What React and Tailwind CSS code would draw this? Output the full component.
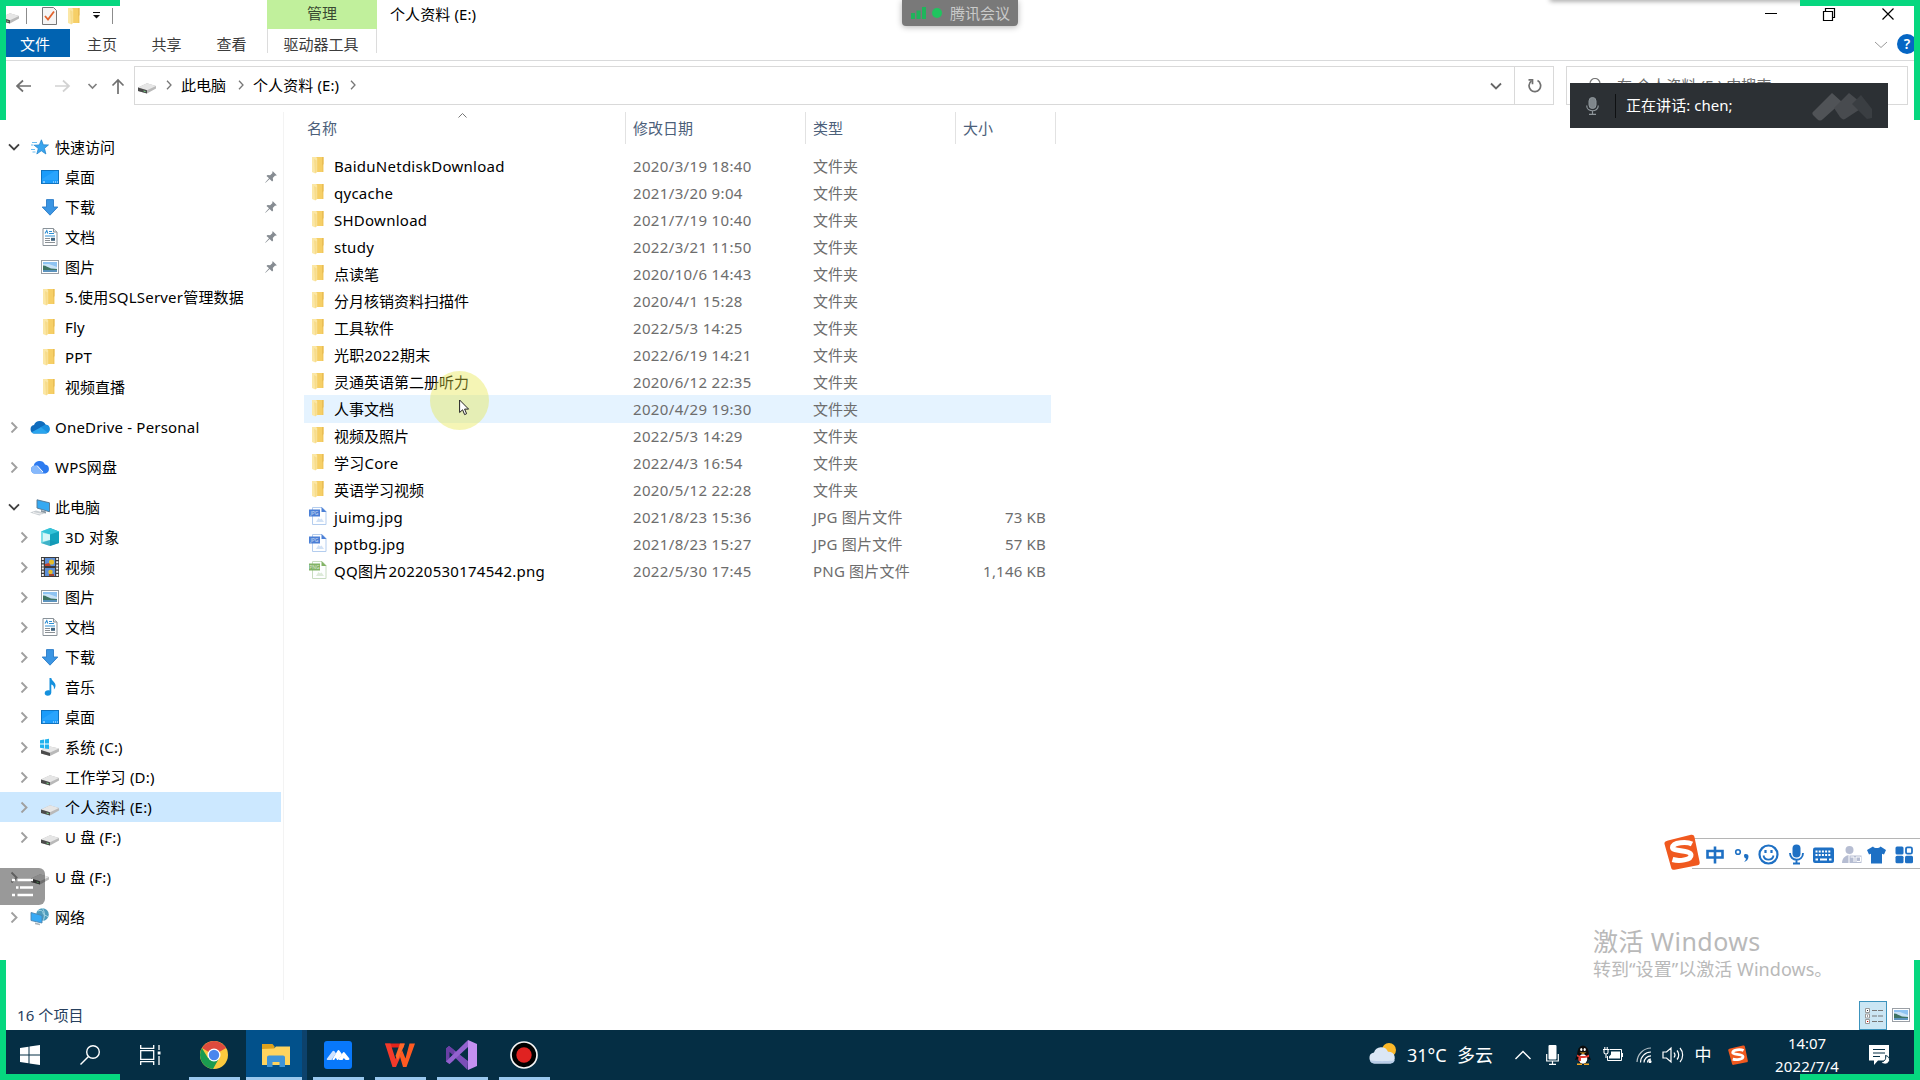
import React from 'react';
import clsx from 'clsx';

const Folder = () => (
  <svg className="h-[18px] w-[14px]" viewBox="0 0 14 18">
    <path d="M5 1h7.5v15H5z" fill="#f6cf66" />
    <path d="M11 1h1.5v7l-1 1.5V16H11z" fill="#e9bd55" />
    <path d="M1 1h4l1.2 1v14L4.4 17.6 1 16z" fill="#fbe7a6" />
    <path d="M3 3l2.6 1.6V16L4 17z" fill="#f7dc8b" />
  </svg>
);

const Drive = ({ className = 'h-3 w-[18px]' }) => (
  <svg className={className} viewBox="0 0 18 12">
    <path d="M0 5.6L9 1.2 18 4v2.6L9 11.4 0 9z" fill="#b9b9b9" />
    <path d="M0 5.6L9 1.2 18 4 9 8.2z" fill="#e6e6e6" />
    <path d="M0 5.6l9 2.6v3.2L0 9z" fill="#4b4b4b" />
    <path d="M5.6 9l2 .6" stroke="#7ee08c" strokeWidth="1" />
  </svg>
);

const SystemDrive = () => (
  <svg className="h-[18px] w-5" viewBox="0 0 20 18">
    <path d="M1 12.1L10 8.500l9 2v3l-9 4.400-9-2.400z" fill="#b9b9b9" />
    <path d="M1 12.100L10 8.500l9 2-9 4z" fill="#e6e6e6" />
    <path d="M1 12.100l9 2.800V18l-9-2.500z" fill="#4b4b4b" />
    <path d="M0 2.200l4-.6v4H0zM4.800 1.500L9 .8v4.800H4.800zM0 6.400h4v4l-4-.6zM4.800 6.400H9v4.700l-4.200-.6z" fill="#22b3ee" />
  </svg>
);

const Desktop = () => (
  <svg className="h-[14px] w-[18px]" viewBox="0 0 18 14">
    <rect x=".5" y=".5" width="17" height="13" fill="#1a9cfb" stroke="#1173bf" />
    <path d="M1 9L14 1h3v9H1z" fill="#35aaff" opacity=".6" />
    <path d="M2 12h2M12 12h1M14 12h1M16 12h1" stroke="#d9efff" />
  </svg>
);

const Download = () => (
  <svg className="h-[17px] w-[18px]" viewBox="0 0 18 17">
    <path d="M5.500.6h7v7.400h4.300L9 16.200 1.200 8h4.300z" fill="#3b95e3" stroke="#2b7cc7" strokeWidth=".9" />
  </svg>
);

const Doc = () => (
  <svg className="h-[18px] w-[16px]" viewBox="0 0 16 18">
    <path d="M1 .5h10.500L15 4v13.500H1z" fill="#fff" stroke="#8a9299" />
    <path d="M11.500.5V4H15" fill="#e8e8e8" stroke="#8a9299" />
    <path d="M3 5.500l1.800-3 1 3M7 3.500h3M7 5.500h5M3 8h10" stroke="#2f8fd3" strokeWidth="1.100" fill="none" />
    <path d="M3 10.500h5M3 12.500h5M3 14.500h10" stroke="#8b9196" />
    <rect x="9" y="9.800" width="4" height="3" fill="#41647f" />
  </svg>
);

const Picture = () => (
  <svg className="h-[14px] w-[18px]" viewBox="0 0 18 14">
    <rect x=".5" y=".5" width="17" height="13" fill="#fff" stroke="#9a9fa5" />
    <rect x="2" y="2" width="14" height="10" fill="#8ec3f2" />
    <path d="M2 4h6l8 3v2H2z" fill="#c8e2f7" />
    <path d="M2 5.500c3 0 5 2 8 3l6 .5v1.500H2z" fill="#3f7463" />
    <path d="M2 10h14v2H2z" fill="#5b93bd" />
  </svg>
);

const Star = () => (
  <svg className="h-[17px] w-[18px]" viewBox="0 0 18 17">
    <path d="M10.400.8l1.900 5 5.200.1-4 3.400 1.400 5.700-4.600-3.200-4.500 3.200 1.500-5.500-4.200-3.300 5.200-.3z" fill="#3aa5ee" stroke="#1c80c9" strokeWidth=".7" />
    <path d="M1 3.500h5M0 6h2.500M0 10.500h4M1.500 13h3" stroke="#6bbcf1" />
  </svg>
);

const OneDrive = () => (
  <svg className="h-[14px] w-5" viewBox="0 0 20 14">
    <path d="M4.500 13.500A4.300 4.300 0 0 1 4 5a6.300 6.300 0 0 1 11.600-.3 4.500 4.500 0 0 1 .4 8.800z" fill="#0f6cbd" />
    <path d="M10 7.500l5.500-3A4.600 4.600 0 0 1 19.800 9c0 2-1 3.300-2 4z" fill="#1a90e0" />
    <path d="M1.500 12.300L11 7.300l7 5.500c-.6.500-1.300.7-2 .7H4.500c-1.200 0-2.300-.4-3-1.200z" fill="#2aa5ee" />
  </svg>
);

const WpsCloud = () => (
  <svg className="h-[14px] w-5" viewBox="0 0 20 14">
    <path d="M4.500 13.500a4 4 0 0 1-.8-7.700A6 6 0 0 1 15 4.500a4.600 4.600 0 0 1 .5 9z" fill="#2d7bf0" />
    <path d="M4.500 13.500a4 4 0 0 1-.8-7.700c2-.6 4 0 5.300 1.600l5 6.100z" fill="#86b8fb" />
    <path d="M7 5.500l6 6.500" stroke="#fff" strokeWidth="1" />
  </svg>
);

const Computer = () => (
  <svg className="h-[17px] w-5" viewBox="0 0 20 17">
    <path d="M7 .8l12.500 3v9L7 9z" fill="#35a9f2" stroke="#56748c" strokeWidth=".9" />
    <path d="M11 11l5 1.500v2l-5-1z" fill="#8b98a3" />
    <path d="M0 13.500l6-2 9 2.500-5.500 2.600z" fill="#c9ced2" />
    <path d="M3 13.500l9 1.800" stroke="#fff" strokeWidth=".7" />
  </svg>
);

const Cube = () => (
  <svg className="h-[18px] w-[18px]" viewBox="0 0 18 18">
    <path d="M0 3.500L9 0v18l-9-3z" fill="#7ddfe8" />
    <path d="M18 3.500L9 0v18l9-3z" fill="#13a2bd" />
    <path d="M0 3.500L9 0l9 3.500-9 3z" fill="#35c3d8" />
    <path d="M2 5l7 1.500V12l-7 1.500z" fill="#d6f6f8" />
    <path d="M9 12l9 3-9 3-9-3z" fill="#1593b0" opacity=".6" />
  </svg>
);

const Film = () => (
  <svg className="h-5 w-[18px]" viewBox="0 0 18 20">
    <rect width="18" height="20" fill="#3c3c3c" />
    <path d="M1.800 1v19M16.200 1v19" stroke="#f4f4f4" strokeWidth="2" strokeDasharray="2 1.200" />
    <rect x="4" y="1" width="10" height="8" fill="#5c8fd8" />
    <rect x="4" y="11" width="10" height="8" fill="#5c8fd8" />
    <circle cx="10.500" cy="5" r="2.600" fill="#e6bd2b" />
    <path d="M4 7l4-1 2 3H4z" fill="#c2452d" />
    <circle cx="9.500" cy="15" r="2.200" fill="#e6bd2b" />
    <path d="M8 17h5v2H8z" fill="#a5442f" />
  </svg>
);

const Music = () => (
  <svg className="h-[18px] w-[14px]" viewBox="0 0 14 18">
    <path d="M6.500 0h1.800c.3 3 4.200 4 4.200 7.500 0 1.700-.7 3-1.600 4 .5-3-.9-4.500-2.600-5v8c0 2-1.600 3.300-3.600 3.300-1.800 0-3-1-3-2.500 0-1.700 1.600-3 3.400-3 .5 0 1 .1 1.400.3z" fill="#1590dd" />
  </svg>
);

const Network = () => (
  <svg className="h-[18px] w-5" viewBox="0 0 20 18">
    <circle cx="12.500" cy="6.500" r="6.300" fill="#4e9cbc" />
    <path d="M8 3c3-1.500 5 0 5 2s3 2 5 4M12 0c3 3 3 9 1 13" stroke="#a9d7e6" fill="none" />
    <path d="M1 4.500l11 3v7.500L1 12.500z" fill="#37aaf5" stroke="#4d86b0" strokeWidth=".9" />
    <path d="M5 14.500l5 1.200v1.500l-5-.9z" fill="#aab4bb" />
  </svg>
);

const Pin = () => (
  <svg className="h-3 w-3" viewBox="0 0 12 12">
    <path d="M7.800.2l4 4-1 .6-.7-.3-2.300 2.400.3 2.600-1 .9L4.600 8 .6 11.800.2 11.400 4 7.300 1.500 4.900l1-1 2.600.3 2.400-2.300-.3-.8z" fill="#868c92" />
  </svg>
);

const Chevron = ({ open = false, className }) => (
  <svg className={clsx('h-3 w-3', className)} viewBox="0 0 12 12" fill="none" strokeWidth="1.900">
    {open ? <path d="M1 3.300l5 5 5-5" stroke="#404040" /> : <path d="M3.500 1.500l5 5-5 5" stroke="#a0a0a0" />}
  </svg>
);

const ImageFile = ({ label, color, pale }) => (
  <svg className="h-[18px] w-[18px]" viewBox="0 0 18 18">
    <path d="M3.500.5H13l4 4v13H3.500z" fill="#fdfeff" stroke={pale} />
    <path d="M12.500 0l5 5h-5z" fill={color} />
    <path d="M7 15l2.500-4 1.500 1.500 1.500-1L15 15z" fill={pale} opacity=".6" />
    <rect y="2.500" width="11" height="7" fill={color} />
    <text x="5.500" y="8" fontSize="5" textAnchor="middle" fill="#fff" opacity=".7">{label}</text>
  </svg>
);

const SogouLogo = ({ className }) => (
  <svg className={className} viewBox="0 0 36 36">
    <path d="M4 6.500L27 .8c1.800-.4 3 .4 3.400 2l5.200 25c.4 1.800-.4 3-2 3.400l-23 4.500c-1.800.4-3-.3-3.400-2L.5 10C0 8 2 7 4 6.500z" fill="#f0591f" />
    <path d="M28 10c-5-2.500-19-2-19.500 3.500-.3 4.500 18 2 18.500 7.500.4 5-12 6.500-18.500 4.500" fill="none" stroke="#fff" strokeWidth="5" />
  </svg>
);

const quickAccess = [
  { name: '桌面', icon: <Desktop />, pinned: true },
  { name: '下载', icon: <Download />, pinned: true },
  { name: '文档', icon: <Doc />, pinned: true },
  { name: '图片', icon: <Picture />, pinned: true },
  { name: '5.使用SQLServer管理数据', icon: <Folder />, folder: true },
  { name: 'Fly', icon: <Folder />, folder: true },
  { name: 'PPT', icon: <Folder />, folder: true },
  { name: '视频直播', icon: <Folder />, folder: true },
];

const thisPc = [
  { name: '3D 对象', icon: <Cube /> },
  { name: '视频', icon: <Film /> },
  { name: '图片', icon: <Picture /> },
  { name: '文档', icon: <Doc /> },
  { name: '下载', icon: <Download /> },
  { name: '音乐', icon: <Music /> },
  { name: '桌面', icon: <Desktop /> },
  { name: '系统 (C:)', icon: <SystemDrive /> },
  { name: '工作学习 (D:)', icon: <Drive className="mt-1.5 h-3 w-[18px]" /> },
  { name: '个人资料 (E:)', icon: <Drive className="mt-1.5 h-3 w-[18px]" />, selected: true },
  { name: 'U 盘 (F:)', icon: <Drive className="mt-1.5 h-3 w-[18px]" /> },
];

const files = [
  ['BaiduNetdiskDownload', '2020/3/19 18:40'],
  ['qycache', '2021/3/20 9:04'],
  ['SHDownload', '2021/7/19 10:40'],
  ['study', '2022/3/21 11:50'],
  ['点读笔', '2020/10/6 14:43'],
  ['分月核销资料扫描件', '2020/4/1 15:28'],
  ['工具软件', '2022/5/3 14:25'],
  ['光职2022期末', '2022/6/19 14:21'],
  ['灵通英语第二册听力', '2020/6/12 22:35'],
  ['人事文档', '2020/4/29 19:30'],
  ['视频及照片', '2022/5/3 14:29'],
  ['学习Core', '2022/4/3 16:54'],
  ['英语学习视频', '2020/5/12 22:28'],
  ['juimg.jpg', '2021/8/23 15:36', 'JPG 图片文件', '73 KB'],
  ['pptbg.jpg', '2021/8/23 15:27', 'JPG 图片文件', '57 KB'],
  ['QQ图片20220530174542.png', '2022/5/30 17:45', 'PNG 图片文件', '1,146 KB'],
];

// Latin runs are set slightly wider than the CJK ones
const spacing = (name) => (/[A-Za-z]/.test(name) ? 'tracking-[0.2px]' : '');

const RootNode = ({ name, icon, open }) => (
  <div className="flex h-[30px] items-center pl-2">
    <Chevron open={open} />
    <span className="ml-2.5 flex w-5 justify-center">{icon}</span>
    <span className={clsx('ml-[5px]', spacing(name))}>{name}</span>
  </div>
);

const ChildNode = ({ name, icon, pinned, folder, selected, expandable }) => (
  <div className={clsx('flex h-[30px] w-[281px] items-center pl-[18px]', selected && 'bg-[#cce8ff]')}>
    <span className="w-3">{expandable && <Chevron />}</span>
    <span className={clsx('ml-2.5 flex w-5', folder ? 'justify-start pl-0.5' : 'justify-center')}>{icon}</span>
    <span className={clsx('ml-[5px] flex-1', spacing(name))}>{name}</span>
    {pinned && <span className="mr-1"><Pin /></span>}
  </div>
);

const TitleBar = () => (
  <div className="flex h-[29px] items-start">
    <div className="flex h-[29px] w-[267px] items-center pt-0.5">
      <span className="ml-px mt-1 flex w-[25px]"><Drive /></span>
      <span className="h-4 w-px bg-[#8c8c8c]" />
      <svg className="ml-[15px] h-[18px] w-[15px]" viewBox="0 0 15 18">
        <path d="M.5.500h11l3 3v14H.5z" fill="#f5f5f5" stroke="#777" />
        <path d="M3 9l3 3.500 6-8" fill="none" stroke="#e2632d" strokeWidth="1.800" />
      </svg>
      <span className="ml-2.5"><Folder /></span>
      <svg className="ml-3 h-2 w-[7px]" viewBox="0 0 7 8"><path d="M0 .5h7" stroke="#111" /><path d="M0 3h7L3.500 6.500z" fill="#111" /></svg>
      <span className="ml-3 h-4 w-px bg-[#8c8c8c]" />
    </div>
    <div className="h-[29px] w-[110px] bg-[#c1f09c] text-center leading-[27px] text-[#3a4a32]">管理</div>
    <div className="ml-[13px] leading-[28px] tracking-[0.1px]">个人资料 (E:)</div>
    <div className="ml-auto flex items-center pt-[7px]">
      <svg className="h-[14px] w-[130px]" viewBox="0 0 130 14" fill="none" stroke="#000">
        <path d="M0 6.500h12" />
        <path d="M58.500 4.500h9v9h-9zM60.500 4.500v-3h9v9h-2" strokeWidth="1.200" />
        <path d="M117.500 1.500l11 11M128.500 1.500l-11 11" strokeWidth="1.200" />
      </svg>
      <span className="w-[25px]" />
    </div>
  </div>
);

const Ribbon = () => (
  <div className="flex h-8 items-start border-b border-[#d9dadb] text-[#3c3c3c]">
    <div className="h-7 w-[70px] bg-[#0163b1] text-center leading-[30px] text-white">文件</div>
    <div className="w-[64px] text-center leading-[31px]">主页</div>
    <div className="w-[65px] text-center leading-[31px]">共享</div>
    <div className="w-[65px] text-center leading-[31px]">查看</div>
    <div className="ml-[3px] h-6 w-[110px] border-x border-[#dcdcdc] pr-0.5 text-center leading-[31px]">驱动器工具</div>
    <svg className="ml-auto mt-3 h-2 w-3" viewBox="0 0 12 8" fill="none" stroke="#999"><path d="M0 1l6 5.500L12 1" /></svg>
    <div className="ml-2.5 mt-[5px] h-5 w-5 rounded-full bg-[#0566c4] text-center text-[14px] font-semibold leading-5 text-white">?</div>
    <span className="w-[3px]" />
  </div>
);

const BreadSep = ({ className }) => (
  <svg className={clsx('h-2.5 w-1.5', className)} viewBox="0 0 6 10" fill="none" stroke="#777" strokeWidth="1.300"><path d="M1 .8L5 5 1 9.200" /></svg>
);

const AddressRow = () => (
  <div className="flex h-[51px] items-start pt-[5px]">
    <div className="flex h-10 w-[134px] items-center">
      <svg className="ml-4 h-4 w-[110px]" viewBox="0 0 110 16" fill="none" strokeWidth="1.700">
        <path d="M15 8H1M7 2.500L1 8l6 5.500" stroke="#707070" />
        <path d="M39 8h14M47 2.500L53 8l-6 5.500" stroke="#d2d2d2" />
        <path d="M72.500 6l4 4 4-4" stroke="#808080" />
        <path d="M102 16V2M96.500 7.500L102 2l5.500 5.500" stroke="#707070" />
      </svg>
    </div>
    <div className="flex h-[39px] w-[1420px] items-center border border-[#d9d9d9]">
      <span className="ml-[3px] mt-1"><Drive /></span>
      <BreadSep className="-mt-0.5 ml-2.5" />
      <span className="-mt-0.5 ml-[9px] w-[45px]">此电脑</span>
      <BreadSep className="-mt-0.5 ml-3" />
      <span className="-mt-0.5 ml-[9px] w-[86px] tracking-[0.1px]">个人资料 (E:)</span>
      <BreadSep className="-mt-0.5 ml-[11px]" />
      <svg className="ml-auto h-3 w-3" viewBox="0 0 12 12" fill="none" stroke="#666" strokeWidth="1.800"><path d="M1 3.500l5 5 5-5" /></svg>
      <span className="ml-3 h-[37px] w-px bg-[#d9d9d9]" />
      <svg className="ml-[13px] mr-[11px] h-[15px] w-[14px]" viewBox="0 0 14 15" fill="none" stroke="#707070" strokeWidth="1.700">
        <path d="M9.500 2.600A5.800 5.800 0 1 1 3.500 3" />
        <path d="M.500 1.800h4v4.500" />
      </svg>
    </div>
    <div className="ml-3 flex h-[39px] w-[342px] items-center border border-[#d9d9d9] text-[#6d6d6d]">
      <svg className="ml-5 h-[15px] w-[14px]" viewBox="0 0 14 15" fill="none" stroke="#777" strokeWidth="1.200"><circle cx="8" cy="5.500" r="5" /><path d="M4.500 9L0 14" /></svg>
      <span className="-mt-0.5 ml-4 tracking-[0.1px]">在 个人资料 (E:) 中搜索</span>
    </div>
  </div>
);

const Sidebar = () => (
  <div className="h-[888px] w-[284px] border-r border-[#f3f3f3] pt-5">
    <RootNode name="快速访问" icon={<Star />} open />
    {quickAccess.map((n) => <ChildNode key={n.name} {...n} />)}
    <div className="mt-2.5"><RootNode name="OneDrive - Personal" icon={<OneDrive />} /></div>
    <div className="mt-2.5"><RootNode name="WPS网盘" icon={<WpsCloud />} /></div>
    <div className="mt-2.5"><RootNode name="此电脑" icon={<Computer />} open /></div>
    {thisPc.map((n) => <ChildNode key={n.name} {...n} expandable />)}
    <div className="mt-2.5"><RootNode name="U 盘 (F:)" icon={<Drive className="mt-1 h-3 w-[18px]" />} /></div>
    <div className="mt-2.5"><RootNode name="网络" icon={<Network />} /></div>
  </div>
);

const FileRow = ({ file, hovered }) => {
  const [name, date, type = '文件夹', size] = file;
  return (
    <div className={clsx('ml-5 flex h-[27px] w-[747px] items-center text-[#6d6d6d]', hovered && 'bg-[#e5f3ff] shadow-[0_1px_0_#e5f3ff]')}>
      <span className="flex w-[30px] pl-[5px]">
        {!size && <span className="-mt-0.5 ml-0.5"><Folder /></span>}
        {size && type.startsWith('JPG') && <span className="-mt-0.5"><ImageFile label="JPG" color="#4b7fd6" pale="#b4cdee" /></span>}
        {size && type.startsWith('PNG') && <span className="-mt-0.5"><ImageFile label="PNG" color="#82b366" pale="#c8dcc0" /></span>}
      </span>
      <span className={clsx('w-[299px] text-black', /[0-9A-Za-z]/.test(name) && 'tracking-[0.26px]')}>{name}</span>
      <span className="w-[180px] tracking-[0.35px]">{date}</span>
      <span className={clsx('w-[130px]', spacing(type))}>{type}</span>
      <span className="w-[103px] text-right tracking-[0.2px]">{size}</span>
    </div>
  );
};

const FileList = () => (
  <div className="flex-1">
    <div className="flex h-8 w-[772px] text-[#4c607a]">
      <div className="flex w-[342px] border-r border-[#e2e2e2] pl-[23px] leading-[33px]">
        <span>名称</span>
        <svg className="ml-[121px] mt-px h-[5px] w-[9px]" viewBox="0 0 9 5" fill="none" stroke="#777"><path d="M.500 4.500l4-4 4 4" /></svg>
      </div>
      <div className="w-[180px] border-r border-[#e2e2e2] pl-[7px] leading-[33px]">修改日期</div>
      <div className="w-[150px] border-r border-[#e2e2e2] pl-[7px] leading-[33px]">类型</div>
      <div className="w-[100px] border-r border-[#e2e2e2] pl-[7px] leading-[33px]">大小</div>
    </div>
    <div className="pt-2">
      {files.map((f) => <FileRow key={f[0]} file={f} hovered={f[0] === '人事文档'} />)}
    </div>
  </div>
);

const StatusBar = () => (
  <div className="flex h-[30px] items-center pl-[17px] text-[#27405e]">
    <span className="tracking-[0.1px]">16 个项目</span>
    <span className="ml-auto flex h-[29px] w-7 items-center justify-center self-end border border-[#3c93bd] bg-[#cbe6f4]">
      <svg className="ml-0.5 h-4 w-[18px]" viewBox="0 0 18 16" fill="none">
        <path d="M.5.5h4v4h-4zM.5 6h4v4h-4zM.5 11.500h4v4h-4z" fill="#fff" stroke="#999" />
        <path d="M2 2.500h1M2 8h1" stroke="#334" /><path d="M2 13.500h1.200" stroke="#c00" />
        <path d="M7 2.500h5M13 2.500h5M7 8h5M13 8h5M7 13.500h5M13 13.500h5" stroke="#777" />
      </svg>
    </span>
    <span className="ml-[5px] mr-2.5"><Picture /></span>
  </div>
);

const TaskButton = ({ children, active }) => (
  <div className={clsx('flex h-[50px] flex-col items-center justify-between', active ? 'w-[61px] border-r-[5px] border-[#0d426c] bg-[#02518b]' : 'w-[51px]')}>
    <div className={clsx('flex h-[47px] items-center pt-[3px]', active ? 'pl-1' : 'pr-0.5')}>{children}</div>
    <div className={clsx('h-[3px] bg-[#9ac8ee]', active ? 'w-14' : 'w-[51px]')} />
  </div>
);

const Taskbar = () => (
  <div className="flex h-[50px] items-start bg-[#052e44] text-white">
    <svg className="ml-5 mt-[15px] h-5 w-5" viewBox="0 0 20 20" fill="#fff"><path d="M0 3l8.500-1.200v7.700H0zM9.500 1.600L20 0v9.500H9.500zM0 10.500h8.500v7.700L0 17zM9.500 10.500H20V20L9.500 18.400z" /></svg>
    <svg className="ml-10 mt-[15px] h-5 w-5" viewBox="0 0 20 20" fill="none" stroke="#fff" strokeWidth="1.400"><circle cx="13" cy="7" r="6.300" /><path d="M8.500 11.500L.5 19.500" /></svg>
    <svg className="ml-10 mt-[15px] h-5 w-[22px]" viewBox="0 0 22 20" fill="none" stroke="#fff" strokeWidth="1.300"><path d="M.7 0v3.300h13V0M.7 5.700h13v8.600H.7zM.7 20v-3.300h13V20M19 0v5M19 11v9" /><rect x="17.700" y="6.500" width="2.800" height="3" fill="#fff" stroke="none" /></svg>
    <div className="ml-[27px] flex">
      <TaskButton>
        <svg className="h-7 w-7" viewBox="0 0 28 28">
          <circle cx="14" cy="14" r="14" fill="#fbc93e" />
          <path d="M14 14L1.900 7A14 14 0 0 1 26.100 7z" fill="#de4b3d" />
          <path d="M1.900 7A14 14 0 0 0 13 28l6.500-11.500L8 17z" fill="#1b9b50" />
          <path d="M14 7h12.100a14 14 0 0 0-1-1.500H12z" fill="#de4b3d" />
          <circle cx="14" cy="14" r="6.500" fill="#fff" />
          <circle cx="14" cy="14" r="5.200" fill="#4a86ee" />
        </svg>
      </TaskButton>
      <span className="w-1.5" />
      <TaskButton active>
        <svg className="h-6 w-7" viewBox="0 0 28 24">
          <path d="M0 1h10.500l2 2.500V6H0z" fill="#dda11c" />
          <path d="M0 6l12-.5 2-2H28V22H0z" fill="#ffd45e" />
          <path d="M5 24V14.500c0-1.200.8-2 2-2h14c1.200 0 2 .8 2 2V24h-5.500v-5h-7v5z" fill="#3f94d8" />
        </svg>
      </TaskButton>
      <span className="w-1.5" />
      <TaskButton>
        <svg className="h-7 w-7" viewBox="0 0 28 28">
          <rect width="28" height="28" rx="3" fill="#0878fb" />
          <path d="M3 17.500l5.500-7.200c.7-.9 1.500-.9 2 0l1.500 2.200-4.500 6.500H4c-1.200 0-1.600-.6-1-1.500z" fill="#cfe3ff" />
          <path d="M8.500 18l5-8.300c.6-.9 1.500-.9 2 0l2.500 3.600-3.500 5.200c-.5.800-1.200.8-1.700 0l-1-1.700-1.300 1.700c-.6.900-2.500.6-2-.5z" fill="#fff" />
          <path d="M15 17.300l3.800-5.600c.6-.9 1.400-.9 2 0l4.400 5.600c.6 1 0 1.700-1 1.700h-2.500L19.800 17 18.500 19h-2.700c-1.200 0-1.300-1-.8-1.700z" fill="#fff" />
        </svg>
      </TaskButton>
      <span className="w-[11px]" />
      <TaskButton>
        <svg className="h-6 w-[30px]" viewBox="0 0 30 24">
          <path d="M0 .5h19v4H2z" fill="#e2231b" />
          <path d="M0 .5h5.500L10.500 16l3-7.500 2.500 4L11 24H7.500z" fill="#f43a2b" />
          <path d="M15 .5h5L13 17l-2.500-4z" fill="#ff6a2a" />
          <path d="M14.500 12l2.500-5 3.500 8.500L24.500.5H30L21.500 24h-3.500z" fill="#ff5a22" />
        </svg>
      </TaskButton>
      <span className="w-[11px]" />
      <TaskButton>
        <svg className="h-[30px] w-[31px]" viewBox="0 0 31 30">
          <path d="M0 8.500l3-2.500 19 15-.5 9z" fill="#7b4eb8" />
          <path d="M0 8.500v13L3.500 24 8 20V10L3 6z" fill="#6a3fa5" />
          <path d="M3.500 12v6l3.500-3z" fill="#052e44" />
          <path d="M3.500 24L22 7V0L0 21.500z" fill="#9362cf" />
          <path d="M22 0l9 4v22l-9 4z" fill="#c490f2" />
          <path d="M22 9.500V20.500L15 15z" fill="#052e44" />
        </svg>
      </TaskButton>
      <span className="w-[11px]" />
      <TaskButton>
        <svg className="h-7 w-7" viewBox="0 0 28 28"><circle cx="14" cy="14" r="13" fill="#000" stroke="#f4f4f4" strokeWidth="1.700" /><circle cx="14" cy="14" r="7.700" fill="#e02221" /></svg>
      </TaskButton>
    </div>

    <div className="ml-auto flex h-[50px] items-center">
      <svg className="mb-[3px] h-[21px] w-7" viewBox="0 0 28 21">
        <circle cx="20" cy="7" r="7" fill="#fbb829" />
        <path d="M5.500 20.500a5.500 5.500 0 0 1-.5-10.900 7.500 7.500 0 0 1 14-.8 6 6 0 0 1 2.500 11.700z" fill="#dbe7f5" />
        <path d="M1 17c2 1.500 22 1.500 25 0-1 2.500-2.500 3.500-4.500 3.500h-16C3 20.500 1.500 19 1 17z" fill="#b9cde8" />
      </svg>
      <span className="ml-2.5 w-[42px] text-[18px]">31°C</span>
      <span className="ml-2 w-9 text-[18px]">多云</span>
      <svg className="ml-[22px] h-2.5 w-4" viewBox="0 0 16 10" fill="none" stroke="#fff" strokeWidth="1.400"><path d="M.5 9L8 1.500 15.500 9" /></svg>
      <svg className="ml-[15px] h-5 w-[13px]" viewBox="0 0 13 20"><rect x="2.500" width="8" height="14.500" rx="1" fill="#fff" /><path d="M.7 9v7h11.600V9M6.500 16v3M3 19.300h7" fill="none" stroke="#fff" strokeWidth="1.200" /></svg>
      <svg className="ml-4 h-5 w-4" viewBox="0 0 16 20">
        <ellipse cx="8" cy="10" rx="6" ry="9.500" fill="#0b0b0b" />
        <path d="M2.500 9L0 15l3-1zM13.500 9L16 15l-3-1z" fill="#0b0b0b" />
        <ellipse cx="8" cy="14" rx="4.300" ry="4.700" fill="#fff" />
        <ellipse cx="6.300" cy="4.500" rx="1.100" ry="1.600" fill="#fff" /><ellipse cx="9.700" cy="4.500" rx="1.100" ry="1.600" fill="#fff" />
        <path d="M4.500 7.500h7L8 9z" fill="#f5a623" />
        <path d="M2 9.500c3 2 9 2 12 0v2.500c-3 1-6 1.300-8 1v3H3.500v-4L2 11.500z" fill="#e23b33" />
        <path d="M2 18.500h5v1.500H2zM9 18.500h5v1.500H9z" fill="#f5a623" />
      </svg>
      <svg className="ml-3 h-4 w-5" viewBox="0 0 20 16"><path d="M6.500 2.500h12v11h-14V9" fill="none" stroke="#fff" /><path d="M8 4.500h9v7H6V9.500l2-2z" fill="#fff" /><path d="M18.500 6h1.500v4h-1.500z" fill="#fff" /><path d="M1 2.500v3c0 2 4 2 4 0v-3M1.800 0v2M4.200 0v2M3 7v4M0 2.500h6" stroke="#fff" fill="none" strokeWidth="1.100" /></svg>
      <svg className="ml-[13px] h-4 w-4" viewBox="0 0 16 16" fill="none" stroke="#fff" strokeWidth="1.200"><path d="M1 15A14.500 14.500 0 0 1 15 1" opacity=".7" /><path d="M4.500 15.500A10.500 10.500 0 0 1 15 5M8 15.500A7 7 0 0 1 15 8.800M11.500 15.500a3.500 3.500 0 0 1 3.500-3.300" /><circle cx="14" cy="14.500" r="1" fill="#fff" /></svg>
      <svg className="ml-2.5 h-[18px] w-[22px]" viewBox="0 0 22 18" fill="none" stroke="#fff" strokeWidth="1.200"><path d="M1 6h3.500L9 2v14l-4.500-4H1zM12 6.500c1.200 1.500 1.200 3.500 0 5M15 4.500c2.300 2.500 2.300 6.500 0 9M18 2c3.500 4 3.500 10 0 14" /></svg>
      <span className="ml-2.5 w-[18px] text-center text-[17px]">中</span>
      <SogouLogo className="ml-4 h-5 w-5" />
      <div className="ml-[21px] w-[76px] text-center leading-[23px]">
        <div className="tracking-[-0.1px]">14:07</div>
        <div className="tracking-[0.2px]">2022/7/4</div>
      </div>
      <svg className="ml-[24px] mr-[30px] h-[21px] w-[21px]" viewBox="0 0 21 21"><path d="M0 0h20v15l-4 .5H9L5 20v-4.500H0z" fill="#fff" /><path d="M4 4.500h12M4 8h12M4 11.500h7" stroke="#052e44" /><path d="M16.500 10.500c1 4-1.500 6.500-4.500 6.500 1.500 3 7.500 3 8.500-1.500.5-2.500-1.500-4.500-4-5z" fill="#fff" stroke="#052e44" /></svg>
    </div>
  </div>
);

const MeetingPill = () => (
  <div className="absolute left-[902px] top-0 flex h-[26px] w-[116px] items-center rounded-b bg-[#797979] pl-[9px] text-[#c9cac9] shadow-[0_1px_6px_rgba(0,0,0,0.3)]">
    <svg className="h-3 w-[15px]" viewBox="0 0 15 12" fill="#1fb45b"><path d="M0 6h4v6H0zM5.500 3.500h4V12h-4zM11 0h4v12h-4z" /></svg>
    <span className="ml-1.5 h-2.5 w-2.5 rounded-full bg-[#1fc45f]" />
    <span className="ml-2">腾讯会议</span>
  </div>
);

const SpeakerToast = () => (
  <div className="absolute left-[1570px] top-[83px] flex h-[45px] w-[318px] items-center bg-[#2c3034] text-white">
    <svg className="ml-4 h-[18px] w-[13px]" viewBox="0 0 13 18" fill="none" stroke="#8f969b"><rect x="3" y=".5" width="7" height="11" rx="3.500" fill="#7f868b" /><path d="M.7 8.500c0 7 11.600 7 11.600 0M6.500 14v3M3 17.300h7" strokeWidth="1.200" /></svg>
    <span className="ml-4 h-6 w-px bg-[#0e1012]" />
    <span className="-mt-0.5 ml-2.5 tracking-[0.05px]">正在讲话: chen;</span>
    <svg className="ml-auto mr-4 h-[30px] w-[60px]" viewBox="0 0 60 30">
      <path d="M2 20L20 2l10 9-19 17c-2 2-4 2-6 0l-4-4c-1-1-1-3 1-4z" fill="#505357" />
      <path d="M22 17L37 2l16 13-20 13c-2 1-3 0-5-2z" fill="#484b4f" />
      <path d="M40 13L49 4l11 14v9l-5 1z" fill="#3a3e42" />
    </svg>
  </div>
);

const ImeBar = () => (
  <div className="absolute left-[1664px] top-[834px] flex w-64 items-start text-[#1e70c4]">
    <SogouLogo className="relative z-10 h-9 w-9 shrink-0" />
    <div className="-ml-2 mt-1 flex h-[31px] flex-1 items-center border-y border-[#b5b5b5] bg-white pl-3.5">
      <svg className="h-[18px] w-[215px] shrink-0 overflow-visible" viewBox="0 -1 215 18" fill="none" stroke="currentColor">
        <path d="M1.500 5h15v6.500h-15zM9 .5v17" strokeWidth="2.600" />
        <circle cx="32" cy="6" r="2.300" strokeWidth="1.600" />
        <path d="M38 9.500c0-2 4.500-2 4.500 1 0 3-2 5-4.500 5.500 1.500-1.500 2-2.500 2-3.500-1 0-2-1-2-3z" fill="currentColor" stroke="none" />
        <circle cx="62.500" cy="8.500" r="9" strokeWidth="2.200" />
        <path d="M57.500 9.500c1 5.500 9 5.500 10 0" strokeWidth="1.800" /><path d="M59.500 4v3M65.500 4v3" strokeWidth="2.200" />
        <rect x="86.500" y="-1.500" width="8" height="13" rx="4" fill="currentColor" stroke="none" />
        <path d="M84 7c0 9 13 9 13 0M90.500 13.500v4M87 17.500h7" strokeWidth="1.900" />
        <rect x="107" y="1.500" width="21" height="15.500" rx="2" fill="currentColor" stroke="none" />
        <path d="M109.500 5.500h16M109.500 9h16" stroke="#fff" strokeWidth="2" strokeDasharray="2 1.200" /><path d="M109.500 13.500h2.500M114 13.500h7M123 13.500h2.500" stroke="#fff" strokeWidth="2" />
        <g stroke="none" fill="#b6bdd2"><circle cx="143.500" cy="4" r="4" /><path d="M136 17c0-10 14-10 15-5v5z" /><path d="M143 9h13v8.500h-13z" stroke="#fff" /></g>
        <path d="M144.500 11h3.500v5M150 16v-5h4.500v4.500H151" stroke="#fff" />
        <path d="M167 .5c1.500 2 6 2 7.500 0l5.500 3.500-2 4.500-2-.8V17.500h-11V7.700l-2 .8-2-4.500z" fill="currentColor" stroke="none" />
        <g fill="currentColor" stroke="none"><rect x="189.500" y="0.500" width="8" height="8" rx="1.500" /><rect x="189.500" y="9.800" width="8" height="7.500" rx="1.500" /><rect x="199" y="9.800" width="8" height="7.500" rx="1.500" /></g>
        <rect x="200" y="1.300" width="6" height="6.400" rx="1.500" strokeWidth="1.800" />
      </svg>
    </div>
  </div>
);

const ShareFrame = () => (
  <>
    <div className="absolute left-0 top-0 h-[120px] w-[120px] border-l-[6px] border-t-[6px] border-[#06d77f] [clip-path:polygon(0_0,100%_0,100%_6px,6px_6px,6px_100%,0_100%)]" />
    <div className="absolute right-0 top-0 h-[120px] w-[120px] border-r-[6px] border-t-[6px] border-[#06d77f]" />
    <div className="absolute bottom-0 left-0 h-[120px] w-[120px] border-b-[6px] border-l-[6px] border-[#06d77f]" />
    <div className="absolute bottom-0 right-0 h-[120px] w-[120px] border-b-[6px] border-r-[6px] border-[#06d77f]" />
  </>
);

export default function App() {
  return (
    <div className="relative flex h-[1080px] w-[1920px] flex-col overflow-hidden bg-white font-['Noto_Sans','Noto_Sans_CJK_SC',sans-serif] text-[15px] leading-5 text-black whitespace-nowrap">
      <TitleBar />
      <Ribbon />
      <AddressRow />
      <div className="flex h-[888px]">
        <Sidebar />
        <FileList />
      </div>
      <StatusBar />
      <Taskbar />

      <div className="absolute left-[1550px] -top-1 h-1 w-[260px] shadow-[0_1px_5px_rgba(0,0,0,0.45)]" />
      <MeetingPill />
      <SpeakerToast />
      <ImeBar />

      <div className="absolute left-[1593px] top-[923px] text-[#b9b9b9]">
        <div className="text-[25px] leading-[36px] tracking-[0.45px]">激活 Windows</div>
        <div className="text-[18px] leading-5 tracking-[0.05px]">转到“设置”以激活 Windows。</div>
      </div>

      <div className="absolute left-[430px] top-[371px] h-[59px] w-[59px] rounded-full bg-[#e6e646]/40" />
      <svg className="absolute left-[459px] top-[399px] h-[17px] w-3" viewBox="0 0 12 17"><path d="M.6 1v12.500l3-2.700 2 4.800 2-.9-2-4.600h4z" fill="#fff" stroke="#222" /></svg>

      <div className="absolute left-0 top-[868px] flex h-[37px] w-[45px] items-center rounded-r-md bg-black/40 pl-3">
        <svg className="h-5 w-[22px]" viewBox="0 0 22 20" fill="none" stroke="#fff" strokeWidth="2.400"><path d="M0 3h3M5.500 3H21M4 10.500h2.500M8 10.500h13M0 18h3M5.500 18H21" /></svg>
      </div>
      <ShareFrame />
    </div>
  );
}
